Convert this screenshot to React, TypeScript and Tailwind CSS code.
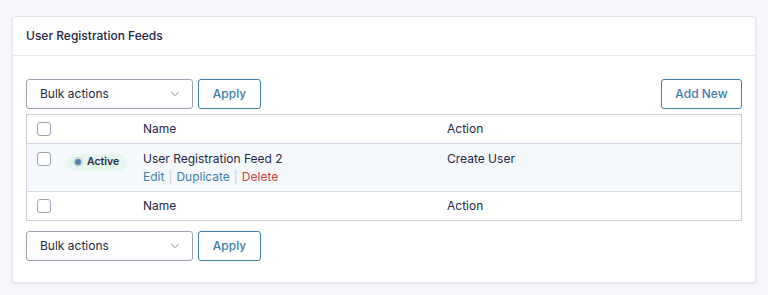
import { ChevronDown } from 'lucide-react';

const font = { fontFamily: 'Inter, "Noto Sans", sans-serif' };

function Checkbox() {
  return (
    <span className="block h-[14px] w-[14px] rounded-[3px] border border-[#9ea3b5] bg-white" />
  );
}

function Toolbar({ withAdd }: { withAdd?: boolean }) {
  return (
    <div className="flex h-[30px] items-stretch gap-[5px]">
      <div className="flex w-[167px] items-center justify-between rounded-[3px] border border-[#9ea3b5] bg-white pl-[13px] pr-[10px] text-[12px] text-[#242748]">
        <span>Bulk actions</span>
        <ChevronDown size={14} strokeWidth={1.5} className="text-[#7b7e8c]" />
      </div>
      <button className="w-[63px] rounded-[3px] border border-[#3e7da6] bg-white text-[12px] font-medium text-[#3e7da6]">
        Apply
      </button>
      {withAdd ? (
        <button className="ml-auto w-[81px] rounded-[3px] border border-[#3e7da6] bg-white text-[12px] font-medium text-[#3e7da6]">
          Add New
        </button>
      ) : null}
    </div>
  );
}

function HeadRow({ top }: { top?: boolean }) {
  return (
    <div
      className={`flex h-[29px] items-center text-[12px] text-[#242748] ${
        top ? 'border-b border-[#d5d7e9]' : 'border-t border-[#d5d7e9]'
      }`}
    >
      <div className="w-[116px] pl-[10px]">
        <Checkbox />
      </div>
      <div className="w-[304px]">Name</div>
      <div>Action</div>
    </div>
  );
}

export default function App() {
  return (
    <div className="h-[295px] bg-[#f5f7fb] px-3 pt-4" style={font}>
      <div className="rounded-[3px] border border-[#e4e6ee] bg-white shadow-[0_1px_3px_rgba(18,25,97,0.05)]">
        <div className="flex h-[39px] items-center border-b border-[#e6e8ef] px-[13px] text-[12px] font-medium text-[#242748]">
          User Registration Feeds
        </div>

        <div className="px-[13px] pb-[21px] pt-[23px]">
          <Toolbar withAdd />

          <div className="mt-[5px] border border-[#cdd0dc]">
            <HeadRow top />
            <div className="flex h-[47px] bg-[#f6f9fc] pt-[6px] text-[12px] leading-[18px] text-[#242748]">
              <div className="w-[40px] pl-[10px] pt-[2px]">
                <Checkbox />
              </div>
              <div className="w-[76px] pt-[2px]">
                <span className="inline-flex h-[17px] items-center gap-[6px] rounded-full bg-[#e4f6ee] pl-[8px] pr-[8px] text-[10.5px] font-semibold leading-none text-[#242748]">
                  <span className="block h-[6px] w-[6px] rounded-full bg-[#5a7fa8] ring-2 ring-[#c9d9e4]" />
                  Active
                </span>
              </div>
              <div className="w-[304px]">
                <div>User Registration Feed 2</div>
                <div className="flex items-center gap-[4px] text-[#3e7da6]">
                  <span>Edit</span>
                  <span className="text-[#c8cad3]">|</span>
                  <span>Duplicate</span>
                  <span className="text-[#c8cad3]">|</span>
                  <span className="text-[#c9413f]">Delete</span>
                </div>
              </div>
              <div>Create User</div>
            </div>
            <HeadRow />
          </div>

          <div className="mt-[10px]">
            <Toolbar />
          </div>
        </div>
      </div>
    </div>
  );
}
